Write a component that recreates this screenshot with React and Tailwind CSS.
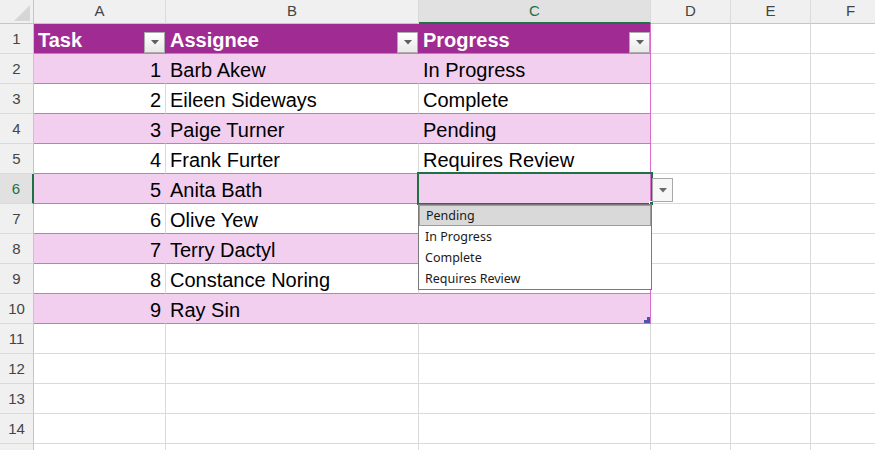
import React from "react"

const rows = [
    { n: 1, kind: "head", a: "Task", b: "Assignee", c: "Progress" },
    { n: 2, kind: "pink", a: "1", b: "Barb Akew", c: "In Progress" },
    { n: 3, kind: "white", a: "2", b: "Eileen Sideways", c: "Complete" },
    { n: 4, kind: "pink", a: "3", b: "Paige Turner", c: "Pending" },
    { n: 5, kind: "white", a: "4", b: "Frank Furter", c: "Requires Review" },
    { n: 6, kind: "pink", a: "5", b: "Anita Bath", c: "" },
    { n: 7, kind: "white", a: "6", b: "Olive Yew", c: "" },
    { n: 8, kind: "pink", a: "7", b: "Terry Dactyl", c: "" },
    { n: 9, kind: "white", a: "8", b: "Constance Noring", c: "" },
    { n: 10, kind: "pink", a: "9", b: "Ray Sin", c: "" },
    { n: 11, kind: "plain" },
    { n: 12, kind: "plain" },
    { n: 13, kind: "plain" },
    { n: 14, kind: "plain" },
    { n: 15, kind: "plain", hidden: true },
]

// border + fill for columns A/B and C, by row kind
const cellStyle = {
    head: {
        ab: "bg-[#A02B93] border-b-[#D86DCD] border-r-[#A02B93]",
        c: "bg-[#A02B93] border-b-[#D86DCD] border-r-[#D86DCD]",
    },
    pink: {
        ab: "bg-[#F2CEEF] border-b-[#D86DCD] border-r-[#F2CEEF]",
        c: "bg-[#F2CEEF] border-b-[#D86DCD] border-r-[#D86DCD]",
    },
    white: {
        ab: "bg-white border-b-[#D86DCD] border-r-[#dadada]",
        c: "bg-white border-b-[#D86DCD] border-r-[#D86DCD]",
    },
    plain: {
        ab: "bg-white border-b-[#dadada] border-r-[#dadada]",
        c: "bg-white border-b-[#dadada] border-r-[#dadada]",
    },
}

const plainCell = "h-[30px] w-[80px] shrink-0 border-r border-b border-r-[#dadada] border-b-[#dadada]"

function FilterButton() {
    return (
        <div className="self-end ml-auto w-[21px] h-[21px] shrink-0 border border-[#ababab] bg-gradient-to-b from-white to-[#e9e9e9] flex items-center justify-center">
            <svg width="8" height="5" viewBox="0 0 8 5">
                <path d="M0 0 H8 L4 4.5 Z" fill="#5f5f5f" />
            </svg>
        </div>
    )
}

function HeadText({ children }) {
    return (
        <span className="pl-[4px] pt-[2px] font-bold text-white text-[20px] leading-none">{children}</span>
    )
}

function Row({ row }) {
    const s = cellStyle[row.kind]
    const selected = row.n === 6
    const head = row.kind === "head"
    return (
        <div className="flex">
            <div
                className={`h-[30px] w-[34px] shrink-0 border-b border-b-[#dadada] flex items-center justify-center pt-[2px] text-[15px] ${
                    selected
                        ? "bg-[#e1e1e1] border-r-2 border-r-[#1e7145] text-[#1e7145]"
                        : "bg-[#f0f0f0] border-r border-r-[#c6c6c6] text-[#444]"
                }`}
            >
                {row.hidden ? "" : row.n}
            </div>
            <div className={`h-[30px] w-[132px] shrink-0 border-r border-b flex items-center ${s.ab}`}>
                {head ? (
                    <>
                        <HeadText>{row.a}</HeadText>
                        <FilterButton />
                    </>
                ) : (
                    <span className="ml-auto pr-[4px] pt-[2px] text-[20px] text-black">{row.a}</span>
                )}
            </div>
            <div className={`h-[30px] w-[253px] shrink-0 border-r border-b flex items-center ${s.ab}`}>
                {head ? (
                    <>
                        <HeadText>{row.b}</HeadText>
                        <FilterButton />
                    </>
                ) : (
                    <span className="pl-[4px] pt-[2px] text-[20px] text-black">{row.b}</span>
                )}
            </div>
            <div className={`h-[30px] w-[232px] shrink-0 border-r border-b flex items-center ${s.c}`}>
                {head ? (
                    <>
                        <HeadText>{row.c}</HeadText>
                        <FilterButton />
                    </>
                ) : (
                    <span className="pl-[4px] pt-[2px] text-[20px] text-black">{row.c}</span>
                )}
            </div>
            <div className={plainCell} />
            <div className={plainCell} />
            <div className={plainCell} />
        </div>
    )
}

function ColHead({ label, width, active }) {
    return (
        <div
            className={`h-[24px] ${width} shrink-0 border-r border-r-[#dadada] flex items-center justify-center text-[15px] ${
                active
                    ? "bg-[#e1e1e1] border-b-2 border-b-[#1e7145] text-[#1e7145]"
                    : "bg-[#f0f0f0] border-b border-b-[#c6c6c6] text-[#444]"
            }`}
        >
            {label}
        </div>
    )
}

export default function App() {
    const options = ["Pending", "In Progress", "Complete", "Requires Review"]
    return (
        <div
            className="relative w-[875px] h-[450px] overflow-hidden bg-white"
            style={{ fontFamily: '"Liberation Sans", Arial, sans-serif' }}
        >
            {/* Column letters */}
            <div className="flex">
                <div className="h-[24px] w-[34px] shrink-0 bg-[#f0f0f0] border-r border-b border-r-[#c6c6c6] border-b-[#c6c6c6] flex items-end justify-end pr-[3px] pb-[2px]">
                    <svg width="16" height="16" viewBox="0 0 16 16">
                        <path d="M16 0 V16 H0 Z" fill="#d6d6d6" />
                    </svg>
                </div>
                <ColHead label="A" width="w-[132px]" />
                <ColHead label="B" width="w-[253px]" />
                <ColHead label="C" width="w-[232px]" active />
                <ColHead label="D" width="w-[80px]" />
                <ColHead label="E" width="w-[80px]" />
                <ColHead label="F" width="w-[80px]" />
            </div>

            {rows.map((r) => (
                <Row key={r.n} row={r} />
            ))}

            {/* Selected cell C6 */}
            <div className="absolute left-[417px] top-[172px] w-[236px] h-[33px] border-2 border-[#1e7145] pointer-events-none" />
            <div className="absolute left-[649px] top-[201px] w-[5px] h-[5px] bg-[#1e7145] border border-white" />

            {/* In-cell dropdown arrow */}
            <div className="absolute left-[652px] top-[178px] w-[21px] h-[24px] border border-[#a9a9a9] bg-[#f7f7f7] flex items-center justify-center">
                <svg width="8" height="5" viewBox="0 0 8 5">
                    <path d="M0 0 H8 L4 4.5 Z" fill="#6a6a6a" />
                </svg>
            </div>

            {/* Validation list */}
            <div
                className="absolute left-[418px] top-[204px] w-[234px] h-[86px] bg-white border border-[#7a7a7a] text-[12.5px] text-[#1a1a1a]"
                style={{ fontFamily: '"Noto Sans", "Open Sans", sans-serif' }}
            >
                {options.map((o, i) => (
                    <div
                        key={o}
                        className={`h-[21px] flex items-center pl-[6px] pt-[2px] ${
                            i === 0 ? "bg-[#d9d9d9] border border-[#9c9c9c] pl-[5px]" : ""
                        }`}
                    >
                        {o}
                    </div>
                ))}
            </div>

            {/* Table resize handle */}
            <div className="absolute left-[647px] top-[317px] w-[3px] h-[3px] bg-[#4a55a8]" />
            <div className="absolute left-[644px] top-[320px] w-[6px] h-[3px] bg-[#4a55a8]" />
        </div>
    )
}
